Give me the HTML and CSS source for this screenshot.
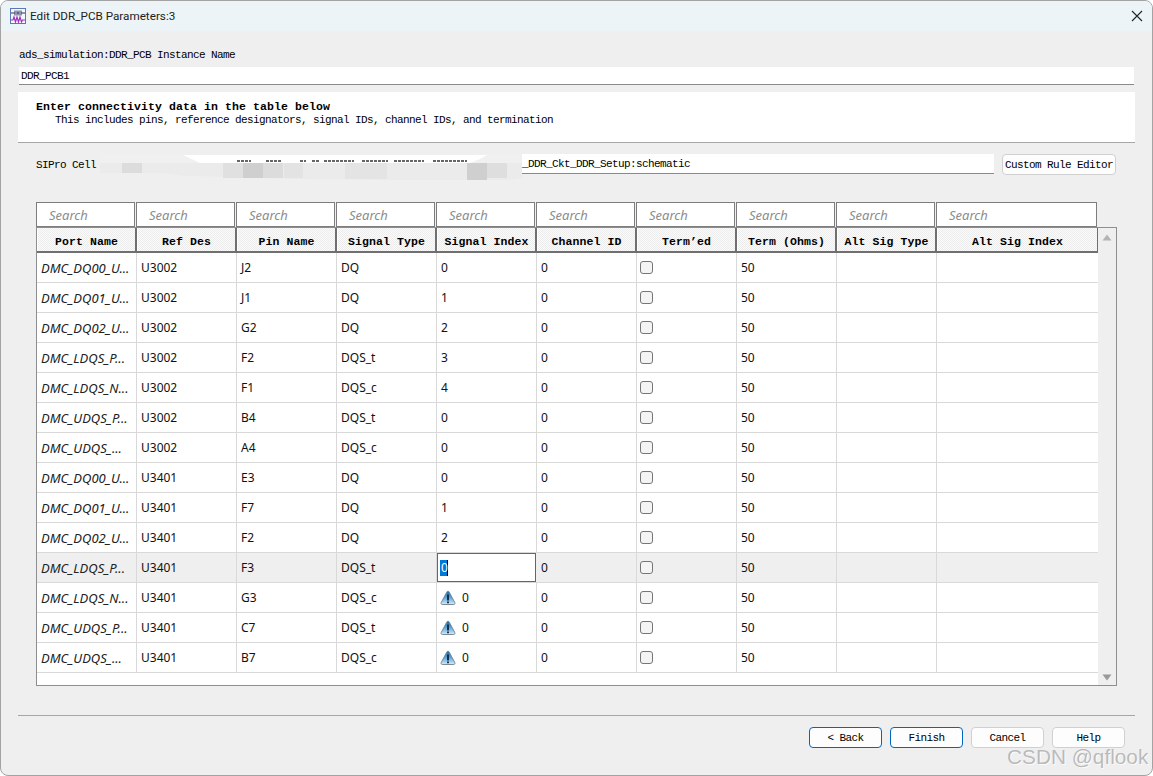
FILE: index.html
```html
<!DOCTYPE html>
<html lang="en">
<head>
<meta charset="utf-8">
<title>Edit DDR_PCB Parameters:3</title>
<link rel="stylesheet" href="styles.css">
</head>
<body>
<div class="window">
  <header class="titlebar">
    <svg class="app-icon" width="16" height="16" viewBox="0 0 16 16">
      <rect x="0.5" y="0.5" width="15" height="15" fill="#f4f8fc" stroke="#5b78b8"/>
      <path d="M1 5h4M5 2.500v5M7 2.500v5M7 5h2M11 2.500v5M9 2.500v5M11 5h4" fill="none" stroke="#30305a" stroke-width="1"/>
      <path d="M1 12h2l1-3 1.500 5 1.500-5 1.500 5 1.500-5 1.500 5 1-2h3" fill="none" stroke="#a030c0" stroke-width="1.200"/>
    </svg>
    <span class="title-text">Edit DDR_PCB Parameters:3</span>
    <svg class="close-icon" width="12" height="12" viewBox="0 0 12 12"><path d="M1 1l10 10M11 1L1 11" fill="none" stroke="#222" stroke-width="1.100"/></svg>
  </header>

  <main class="content">
    <div class="inst-label mono">ads_simulation:DDR_PCB Instance Name</div>
    <div class="inst-input mono">DDR_PCB1</div>

    <section class="info">
      <div class="info-head">Enter connectivity data in the table below</div>
      <div class="info-sub mono">This includes pins, reference designators, signal IDs, channel IDs, and termination</div>
    </section>

    <div class="cell-row">
      <span class="cell-label mono">SIPro Cell</span>
      <div class="cell-field mono">
        <svg class="smudge" width="422" height="28" viewBox="0 0 422 28">
          <rect x="0" y="18" width="422" height="3" fill="#efefef"/>
          <path d="M0 0H422V24L410 26L300 26L200 25L130 23L85 22L60 19H0Z" fill="#ebebeb"/>
          <path d="M0 0H422V9H0Z" fill="#f0f0f0"/>
          <path d="M83 1H387L380 5L370 9H100Z" fill="#ffffff"/>
          <rect x="22" y="9" width="20" height="10" fill="#dcdcdc"/>
          <rect x="123" y="9" width="20" height="15" fill="#e0e0e0"/>
          <rect x="143" y="9" width="20" height="15" fill="#cfcfcf"/>
          <rect x="163" y="9" width="20" height="15" fill="#dcdcdc"/>
          <rect x="184" y="9" width="19" height="15" fill="#e3e3e3"/>
          <rect x="245" y="9" width="42" height="16" fill="#e4e4e4"/>
          <rect x="367" y="9" width="20" height="17" fill="#cfcfcf"/>
          <rect x="387" y="9" width="20" height="15" fill="#dedede"/>
          <path d="M137 7h14M166 7h16M200 7h6M212 7h8M224 7h30M262 7h26M294 7h30M333 7h34" fill="none" stroke="#666" stroke-width="2" stroke-dasharray="3 1"/>
        </svg>
        <span class="cell-path">_DDR_Ckt_DDR_Setup:schematic</span>
      </div>
      <button class="btn btn-small mono">Custom Rule Editor</button>
    </div>

    <div class="search-row">
      <div class="search">Search</div>
      <div class="search">Search</div>
      <div class="search">Search</div>
      <div class="search">Search</div>
      <div class="search">Search</div>
      <div class="search">Search</div>
      <div class="search">Search</div>
      <div class="search">Search</div>
      <div class="search">Search</div>
      <div class="search search-last">Search</div>
    </div>

    <div class="grid-frame">
      <div class="grid-main">
        <div class="row head">
          <div>Port Name</div><div>Ref Des</div><div>Pin Name</div><div>Signal Type</div><div>Signal Index</div><div>Channel ID</div><div>Term’ed</div><div>Term (Ohms)</div><div>Alt Sig Type</div><div>Alt Sig Index</div>
        </div>

        <div class="row"><div class="port">DMC_DQ00_U...</div><div>U3002</div><div>J2</div><div>DQ</div><div>0</div><div>0</div><div><span class="check"></span></div><div>50</div><div></div><div></div></div>
        <div class="row"><div class="port">DMC_DQ01_U...</div><div>U3002</div><div>J1</div><div>DQ</div><div>1</div><div>0</div><div><span class="check"></span></div><div>50</div><div></div><div></div></div>
        <div class="row"><div class="port">DMC_DQ02_U...</div><div>U3002</div><div>G2</div><div>DQ</div><div>2</div><div>0</div><div><span class="check"></span></div><div>50</div><div></div><div></div></div>
        <div class="row"><div class="port">DMC_LDQS_P...</div><div>U3002</div><div>F2</div><div>DQS_t</div><div>3</div><div>0</div><div><span class="check"></span></div><div>50</div><div></div><div></div></div>
        <div class="row"><div class="port">DMC_LDQS_N...</div><div>U3002</div><div>F1</div><div>DQS_c</div><div>4</div><div>0</div><div><span class="check"></span></div><div>50</div><div></div><div></div></div>
        <div class="row"><div class="port">DMC_UDQS_P...</div><div>U3002</div><div>B4</div><div>DQS_t</div><div>0</div><div>0</div><div><span class="check"></span></div><div>50</div><div></div><div></div></div>
        <div class="row"><div class="port">DMC_UDQS_...</div><div>U3002</div><div>A4</div><div>DQS_c</div><div>0</div><div>0</div><div><span class="check"></span></div><div>50</div><div></div><div></div></div>
        <div class="row"><div class="port">DMC_DQ00_U...</div><div>U3401</div><div>E3</div><div>DQ</div><div>0</div><div>0</div><div><span class="check"></span></div><div>50</div><div></div><div></div></div>
        <div class="row"><div class="port">DMC_DQ01_U...</div><div>U3401</div><div>F7</div><div>DQ</div><div>1</div><div>0</div><div><span class="check"></span></div><div>50</div><div></div><div></div></div>
        <div class="row"><div class="port">DMC_DQ02_U...</div><div>U3401</div><div>F2</div><div>DQ</div><div>2</div><div>0</div><div><span class="check"></span></div><div>50</div><div></div><div></div></div>
        <div class="row selected"><div class="port">DMC_LDQS_P...</div><div>U3401</div><div>F3</div><div>DQS_t</div><div class="editor"><span class="sel">0</span></div><div>0</div><div><span class="check"></span></div><div>50</div><div></div><div></div></div>
        <div class="row"><div class="port">DMC_LDQS_N...</div><div>U3401</div><div>G3</div><div>DQS_c</div><div class="warned"><svg class="warn" width="16" height="16" viewBox="0 0 16 16"><use href="#warn-tri"/></svg>0</div><div>0</div><div><span class="check"></span></div><div>50</div><div></div><div></div></div>
        <div class="row"><div class="port">DMC_UDQS_P...</div><div>U3401</div><div>C7</div><div>DQS_t</div><div class="warned"><svg class="warn" width="16" height="16" viewBox="0 0 16 16"><use href="#warn-tri"/></svg>0</div><div>0</div><div><span class="check"></span></div><div>50</div><div></div><div></div></div>
        <div class="row"><div class="port">DMC_UDQS_...</div><div>U3401</div><div>B7</div><div>DQS_c</div><div class="warned"><svg class="warn" width="16" height="16" viewBox="0 0 16 16"><use href="#warn-tri"/></svg>0</div><div>0</div><div><span class="check"></span></div><div>50</div><div></div><div></div></div>
      </div>
      <div class="scrollbar">
        <svg width="10" height="7" viewBox="0 0 10 7"><path d="M5 0.500L9.500 6.500H0.500Z" fill="#b4b4b4"/></svg>
        <svg width="10" height="7" viewBox="0 0 10 7"><path d="M5 6.500L9.500 0.500H0.500Z" fill="#9a9a9a"/></svg>
      </div>
    </div>

    <div class="divider"></div>

    <div class="actions">
      <button class="btn btn-wide btn-default mono">&lt; Back</button>
      <button class="btn btn-wide btn-default mono">Finish</button>
      <button class="btn btn-wide mono">Cancel</button>
      <button class="btn btn-wide mono">Help</button>
    </div>
  </main>

  <div class="watermark">CSDN @qflook</div>
</div>

<svg class="defs" width="0" height="0">
  <defs>
    <linearGradient id="warn-fill" x1="0" y1="0" x2="0" y2="1">
      <stop offset="0" stop-color="#1668a8"/>
      <stop offset="0.500" stop-color="#5fa8dc"/>
      <stop offset="1" stop-color="#d8ecf8"/>
    </linearGradient>
    <g id="warn-tri">
      <path d="M8 1.200C8.700 1.200 9 1.600 9.300 2.200L14.800 12.600C15.300 13.700 14.800 14.500 13.700 14.500H2.300C1.200 14.500 0.700 13.700 1.200 12.600L6.700 2.200C7 1.600 7.300 1.200 8 1.200Z" fill="url(#warn-fill)" stroke="#7d8a94" stroke-width="1"/>
      <path d="M8 4.500V10.500" stroke="#10233a" stroke-width="1.800"/>
      <path d="M8 11.500V13.200" stroke="#10233a" stroke-width="1.800"/>
    </g>
  </defs>
</svg>
</body>
</html>
```

FILE: styles.css
```css
* { box-sizing: border-box; }

html, body {
  margin: 0;
  padding: 0;
  background: #ffffff;
}

body {
  width: 1153px;
  height: 776px;
  overflow: hidden;
  font-family: "Noto Sans", "Open Sans", sans-serif;
  font-size: 12px;
  color: #111;
}

.mono {
  font-family: "Liberation Mono", "DejaVu Sans Mono", monospace;
  font-size: 11px;
  letter-spacing: -0.6px;
  color: #000;
}

.window {
  position: relative;
  width: 1153px;
  height: 776px;
  display: flex;
  flex-direction: column;
  background: #efefef;
  border: 1px solid #a3a3a3;
  border-radius: 8px;
  overflow: hidden;
}

.titlebar {
  flex: none;
  height: 30px;
  display: flex;
  align-items: center;
  padding: 0 9px 0 9px;
  background: #edf4f8;
}

.app-icon { flex: none; margin-right: 4px; }

.title-text {
  font-family: Roboto, "Noto Sans", sans-serif;
  font-size: 11.700px;
  color: #222;
  flex: 1;
}

.close-icon { flex: none; }

.content {
  flex: 1;
  display: flex;
  flex-direction: column;
  padding: 0 17px;
}

.inst-label {
  height: 16px;
  margin-top: 16px;
  margin-left: 1px;
  line-height: 16px;
}

.inst-input {
  height: 18px;
  margin: 4px 1px 0 1px;
  padding-left: 2px;
  line-height: 19px;
  background: #fff;
  border-bottom: 1px solid #8a8a8a;
}

.info {
  height: 51px;
  margin-top: 7px;
  padding: 8px 18px 0;
  background: #fff;
  border-bottom: 1px solid #a6a6a6;
}

.info-head {
  height: 13px;
  line-height: 13px;
  font-family: "Liberation Mono", monospace;
  font-size: 11.500px;
  font-weight: 700;
  letter-spacing: 0.100px;
  color: #000;
}

.info-sub {
  height: 13px;
  line-height: 15px;
  padding-left: 19px;
}

.cell-row {
  display: flex;
  align-items: flex-start;
  height: 21px;
  margin-top: 11px;
  padding: 0 20px 0 18px;
}

.cell-label {
  flex: none;
  width: 64px;
  line-height: 23px;
}

.cell-field {
  position: relative;
  flex: none;
  width: 894px;
  height: 20px;
  line-height: 21px;
  background: #fff;
  border-bottom: 1px solid #8a8a8a;
  padding-left: 422px;
}

.smudge {
  position: absolute;
  left: 0;
  top: 0;
}

.cell-path { position: relative; }

.btn {
  display: block;
  padding: 0;
  background: #fdfdfd;
  border: 1px solid #d0d0d0;
  border-radius: 4px;
}

.btn-small {
  flex: none;
  width: 114px;
  height: 21px;
  margin-left: 8px;
}

.search-row {
  display: flex;
  gap: 1px;
  height: 25px;
  margin-top: 27px;
  margin-left: 18px;
}

.search {
  width: 99px;
  height: 25px;
  padding-left: 12px;
  line-height: 24px;
  background: #fff;
  border: 1px solid #7d7d7d;
  font-size: 13px;
  font-style: italic;
  color: #8c8c8c;
}

.search-last { width: 161px; }

.grid-frame {
  display: flex;
  flex: none;
  width: 1081px;
  height: 459px;
  margin-left: 18px;
  background: #fff;
  border: 1px solid #8e8e8e;
}

.grid-main {
  width: 1061px;
  flex: none;
}

.row {
  display: grid;
  grid-template-columns: repeat(9, 100px) 161px;
  height: 30px;
  border-bottom: 1px solid #d9d9d9;
}

.row > div {
  display: flex;
  align-items: center;
  padding-left: 4px;
  border-right: 1px solid #d9d9d9;
  overflow: hidden;
  white-space: nowrap;
}

.row > div:last-child { border-right: 0; }

.row > .port {
  font-size: 13px;
  font-style: italic;
  color: #222;
}

.row.head {
  height: 25px;
  border-bottom: 2px solid #6f6f6f;
}

.row.head > div {
  justify-content: center;
  padding: 3px 0 0;
  background: repeating-conic-gradient(#fbfbfb 0 25%, #ececec 0 50%) 0 0 / 2px 2px;
  border-left: 1px solid #fff;
  border-right: 2px solid #6f6f6f;
  font-family: "Liberation Mono", monospace;
  font-size: 11.500px;
  font-weight: 700;
  letter-spacing: 0.100px;
  color: #000;
}

.row.head > div:last-child { border-right: 1px solid #6f6f6f; }

.row.selected { background: #efefef; }

.row > .editor {
  padding-left: 2px;
  background: #fff;
  border: 1px solid #666;
  margin-right: 1px;
}

.sel {
  display: inline-block;
  width: 8px;
  background: #0078d7;
  color: #fff;
  border-right: 1px solid #000;
  line-height: 16px;
  padding-left: 1px;
}

.row > .warned { padding-left: 3px; }

.warn { flex: none; margin-right: 6px; }

.check {
  display: block;
  width: 13px;
  height: 13px;
  margin-left: -1px;
  background: #f4f4f4;
  border: 1px solid #767676;
  border-radius: 3px;
}

.scrollbar {
  flex: 1;
  display: flex;
  flex-direction: column;
  justify-content: space-between;
  align-items: center;
  padding: 6px 0 4px;
  background: #efefef;
}

.scrollbar svg { display: block; }

.divider {
  height: 1px;
  margin: 29px 0 0 0;
  background: #a6a6a6;
}

.actions {
  display: flex;
  gap: 8px;
  justify-content: flex-end;
  margin-top: 11px;
  margin-right: 10px;
}

.btn-wide {
  width: 73px;
  height: 21px;
}

.btn-default { border-color: #0067c0; }

.watermark {
  position: absolute;
  left: 1006px;
  top: 743px;
  font-family: "Liberation Sans", Arial, sans-serif;
  font-size: 20.800px;
  line-height: 26px;
  color: rgba(120, 120, 120, 0.48);
  text-shadow: 1px 1px 0 rgba(255, 255, 255, 0.7);
  white-space: nowrap;
}

.defs { position: absolute; }
```
